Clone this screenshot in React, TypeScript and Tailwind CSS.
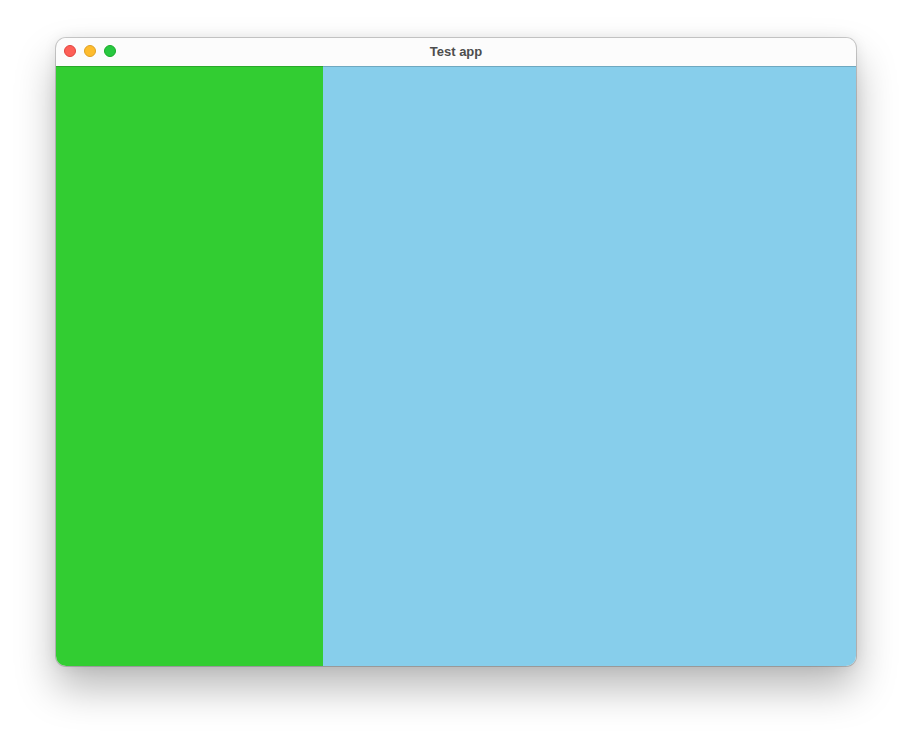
export default function App() {
  return (
    <div className="flex h-[740px] w-full justify-center bg-white pt-[38px]">
      <div className="flex h-[628px] w-[800px] flex-col overflow-hidden rounded-[10px] bg-[#fcfcfc] shadow-[0_0_0_1px_rgba(0,0,0,0.18),0_22px_40px_rgba(0,0,0,0.28),0_0_14px_rgba(0,0,0,0.08)]">
        {/* Title bar */}
        <div className="relative z-10 flex h-[28px] shrink-0 items-center bg-[#fcfcfc] shadow-[0_1px_0_rgba(0,0,0,0.18)]">
          <div className="absolute left-[8px] top-[7px] flex gap-[8px]">
            <span className="h-[12px] w-[12px] rounded-full border border-[#e0443e] bg-[#fe5f57]" />
            <span className="h-[12px] w-[12px] rounded-full border border-[#dea123] bg-[#febc2e]" />
            <span className="h-[12px] w-[12px] rounded-full border border-[#1aab29] bg-[#28c840]" />
          </div>
          <span className="w-full text-center font-['Liberation_Sans',Arial,sans-serif] text-[13px] font-bold text-[#4d4d4d]">
            Test app
          </span>
        </div>

        {/* Content */}
        <div className="flex flex-1">
          <div className="w-[267px] bg-[#32cd32]" />
          <div className="flex-1 bg-[#87ceeb]" />
        </div>
      </div>
    </div>
  );
}
